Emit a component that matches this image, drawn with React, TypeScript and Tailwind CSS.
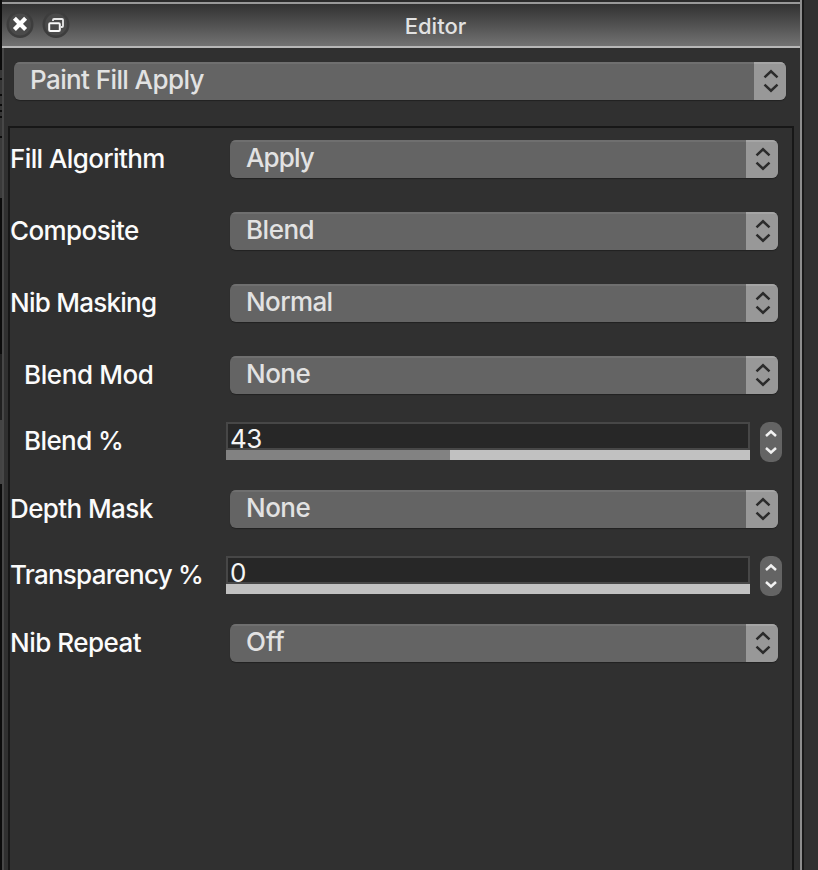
import React from 'react';

const selectText = 'text-[26px] leading-[34px] font-[450] text-[#e2e2e2] whitespace-nowrap';
const labelText = 'w-[220px] shrink-0 text-[26px] leading-[38px] font-medium text-[#fbfbfb] whitespace-nowrap';

function Select({ value, tracking }: { value: string; tracking: string }) {
  return (
    <div className="flex h-[38px] flex-1 overflow-hidden rounded-[6px] bg-[#646464] shadow-[0_1px_1px_#222222]">
      <div className="flex-1 border-t-2 border-[#6f6f6f] pl-4">
        <div className={`${selectText} ${tracking} -mt-px`}>{value}</div>
      </div>
      <div className="w-8 border-t-2 border-[#a5a5a5] bg-[#989898]">
        <svg width="32" height="36" viewBox="0 2 32 36" fill="none" stroke="#2b2b2b" strokeWidth="2.5">
          <path d="M10.5 15.3 L17 9.3 L23.5 15.3 M10.5 22.7 L17 28.7 L23.5 22.7" />
        </svg>
      </div>
    </div>
  );
}

function Spin({ value, percent }: { value: string; percent: number }) {
  return (
    <div className="-ml-1 flex h-10 flex-1">
      <div className="h-[38px] w-[524px]">
        <div className="h-7 border-2 border-[#474747] bg-[#272727] pl-0.5">
          <div className="-mt-0.5 text-[26px] leading-[34px] tracking-[-0.5px] text-[#f5f5f5]">{value}</div>
        </div>
        <div className="h-2.5 bg-[#c1c1c1]">
          <div className="h-2.5 bg-[#828282]" style={{ width: `${percent}%` }} />
        </div>
      </div>
      <div className="ml-2.5 h-10 w-[22px] rounded-[9px] bg-[#646464]">
        <svg width="22" height="40" viewBox="0 0 22 40" fill="none" stroke="#f2f2f2" strokeWidth="2.5">
          <path d="M6 14 L11 9.5 L16 14 M6 26 L11 30.5 L16 26" />
        </svg>
      </div>
    </div>
  );
}

type Row = { label: string; value: string; kind: 'select' | 'spin'; gap: string; pad: string; lt: string; vt: string; percent?: number };

const rows: Row[] = [
  { label: 'Fill Algorithm', value: 'Apply', kind: 'select', gap: 'mb-[34px]', pad: '', lt: 'tracking-[-0.6px]', vt: 'tracking-[-0.9px]' },
  { label: 'Composite', value: 'Blend', kind: 'select', gap: 'mb-[34px]', pad: '', lt: 'tracking-[-0.6px]', vt: 'tracking-[-0.5px]' },
  { label: 'Nib Masking', value: 'Normal', kind: 'select', gap: 'mb-[34px]', pad: '', lt: 'tracking-[-0.75px]', vt: 'tracking-[-0.6px]' },
  { label: 'Blend Mod', value: 'None', kind: 'select', gap: 'mb-7', pad: 'pl-3.5', lt: 'tracking-[-0.4px]', vt: 'tracking-[-0.5px]' },
  { label: 'Blend %', value: '43', kind: 'spin', gap: 'mb-7', pad: 'pl-3.5', lt: 'tracking-[-0.6px]', vt: '', percent: 42.75 },
  { label: 'Depth Mask', value: 'None', kind: 'select', gap: 'mb-7', pad: '', lt: 'tracking-[-0.6px]', vt: 'tracking-[-0.5px]' },
  { label: 'Transparency %', value: '0', kind: 'spin', gap: 'mb-7', pad: '', lt: 'tracking-[-0.75px]', vt: '', percent: 0 },
  { label: 'Nib Repeat', value: 'Off', kind: 'select', gap: '', pad: '', lt: 'tracking-[-0.5px]', vt: '' },
];

export default function App() {
  return (
    <div className="flex h-[870px] w-[818px] overflow-hidden bg-[#303030] font-['Inter','Liberation_Sans',sans-serif]">
      <div className="w-0.5 shrink-0 bg-[#0b0b0b]">
        <div className="h-[70px]" />
        <div className="h-2 bg-[#363636]" />
        <div className="h-0.5" />
        <div className="h-3.5 bg-[#363636]" />
        <div className="h-0.5" />
        <div className="h-2 bg-[#363636]" />
        <div className="h-0.5" />
        <div className="h-1 bg-[#363636]" />
        <div className="h-0.5" />
        <div className="h-1 bg-[#363636]" />
        <div className="h-0.5" />
        <div className="h-[18px] bg-[#363636]" />
        <div className="h-0.5" />
        <div className="h-[60px] bg-[#3a3a3a]" />
        <div className="h-[156px]" />
        <div className="h-[66px] bg-[#202020]" />
        <div className="h-[64px] bg-[#444444]" />
      </div>
      <div className="flex w-[798px] shrink-0 flex-col">
        <div className="h-0.5 shrink-0 bg-[#2b2b2b]" />
        <div className="flex h-[46px] shrink-0 items-center border-y-2 border-t-[#999999] border-b-[#b8b8b8] bg-linear-to-b from-[#323232] to-[#737373]">
          <svg width="72" height="42" viewBox="2 4 72 42" fill="none">
            <circle cx="20" cy="24.5" r="13.5" fill="#3d3d3d" />
            <circle cx="56" cy="24.5" r="13.5" fill="#3d3d3d" />
            <circle cx="20" cy="24.5" r="11" fill="#4a4a4a" />
            <circle cx="56" cy="24.5" r="11" fill="#4a4a4a" />
            <path d="M14.4 18.2 L25.6 29.4 M25.6 18.2 L14.4 29.4" stroke="#ffffff" strokeWidth="4.2" />
            <path d="M53 21 V20 Q53 19 54 19 H62 Q63 19 63 20 V26 Q63 27 62 27 H61" stroke="#e8e8e8" strokeWidth="1.8" />
            <rect x="49.2" y="23.2" width="10.6" height="7.8" rx="1" stroke="#f8f8f8" strokeWidth="2" />
          </svg>
          <div className="flex-1 pt-0.5 pr-[3px] text-center text-[22px] leading-[42px] font-medium text-[#e2e2e2]">Editor</div>
        </div>
        <div className="flex flex-1 flex-col border-l-2 border-[#474747]">
          <div className="mt-3.5 mr-3.5 ml-2.5 flex">
            <Select value="Paint Fill Apply" tracking="tracking-[-0.6px]" />
          </div>
          <div className="mt-[26px] mr-1.5 ml-1 flex-1 border-2 border-b-0 border-[#171717] pt-3 pr-3.5">
            {rows.map((r) => (
              <div key={r.label} className={`flex ${r.gap}`}>
                <div className={`${labelText} ${r.lt} ${r.pad}`}>{r.label}</div>
                {r.kind === 'select' ? <Select value={r.value} tracking={r.vt} /> : <Spin value={r.value} percent={r.percent ?? 0} />}
              </div>
            ))}
          </div>
        </div>
      </div>
      <div className="w-0.5 shrink-0 bg-[#8e8e8e]" />
      <div className="w-0.5 shrink-0 bg-[#181818]" />
      <div className="flex-1 bg-[#303030]" />
    </div>
  );
}
